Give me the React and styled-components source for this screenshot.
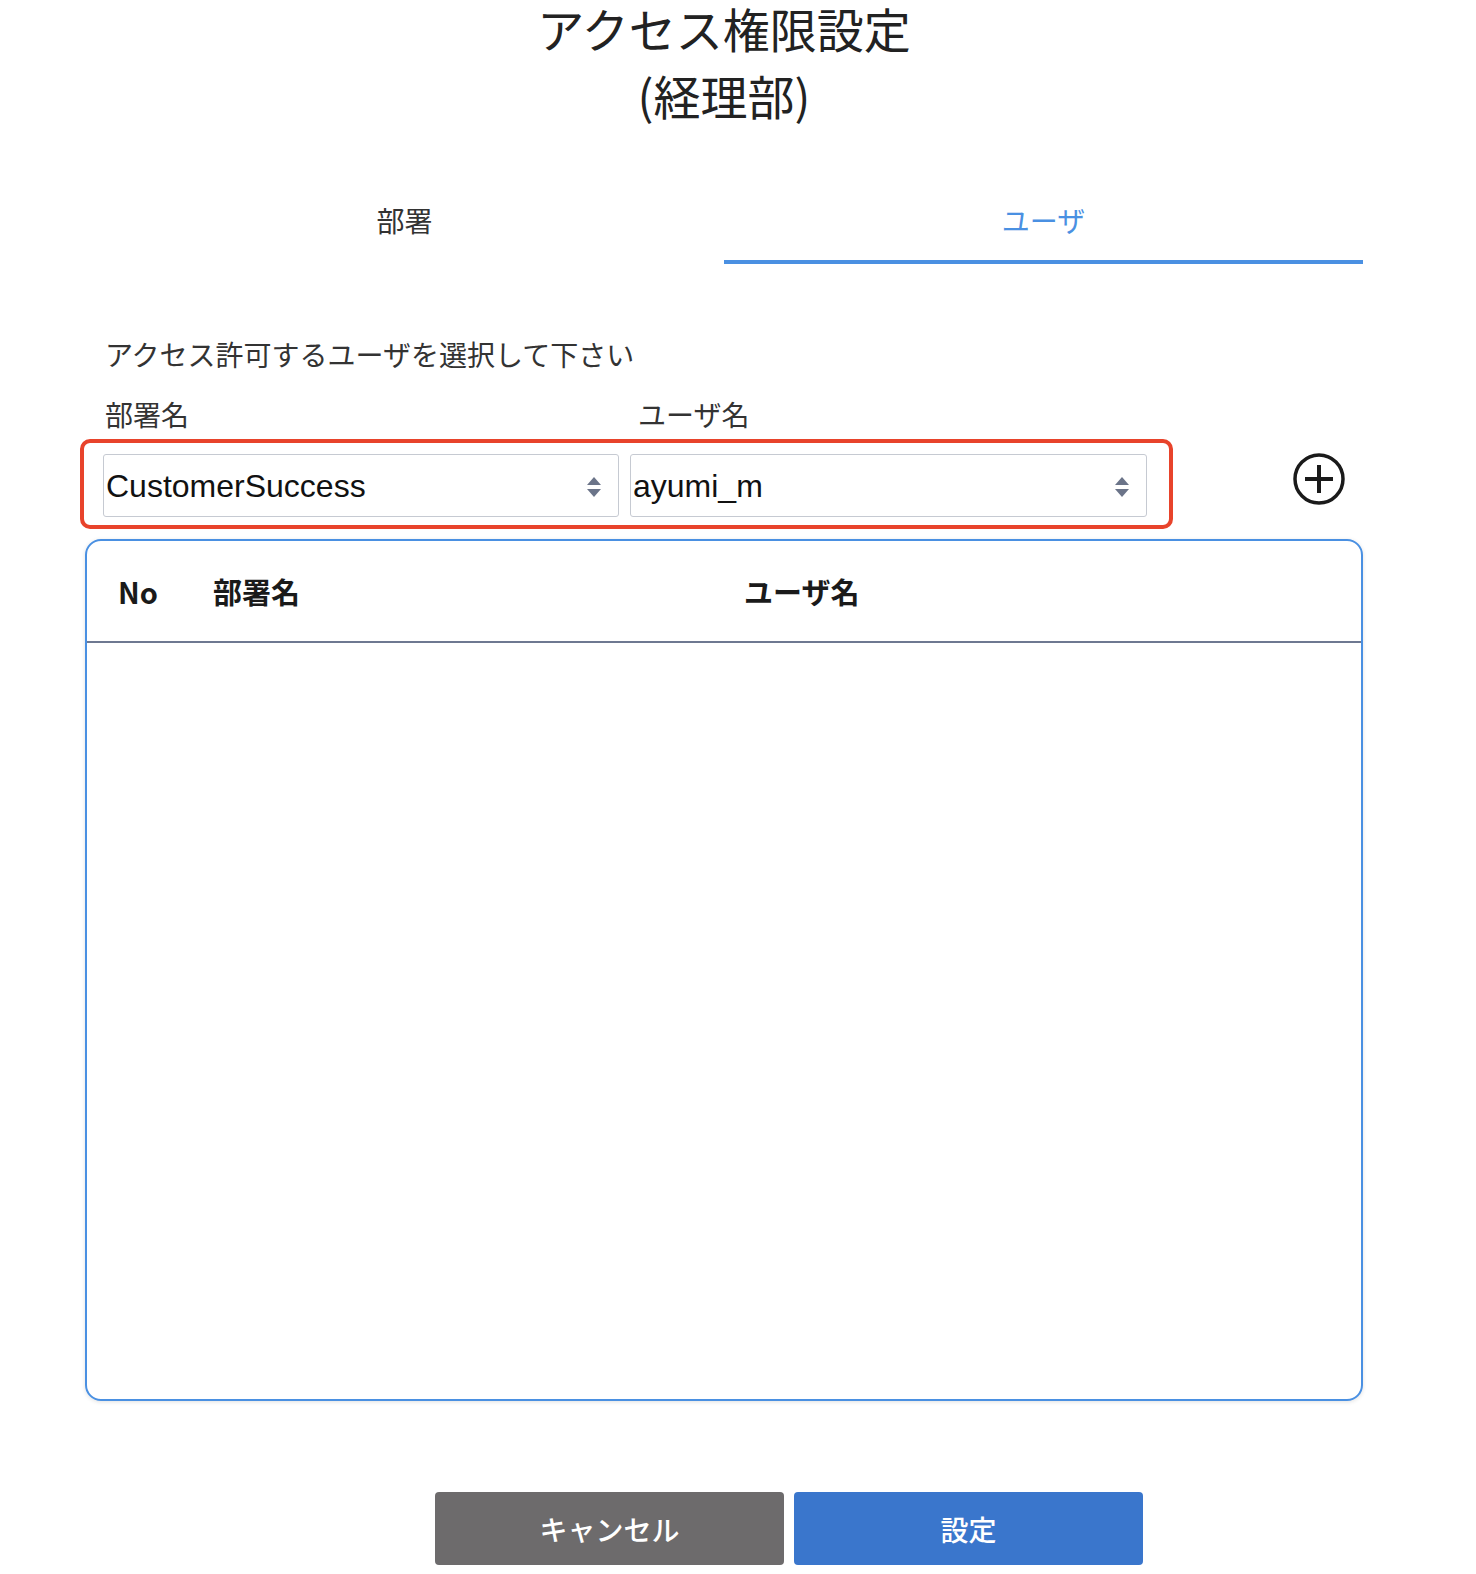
import React, { useState } from 'react';
import styled, { createGlobalStyle } from 'styled-components';

const GlobalStyle = createGlobalStyle`
  body {
    margin: 0;
    background: #fff;
    color: #222;
    font-family: "Noto Sans CJK JP", "Noto Sans", sans-serif;
  }
`;

const Page = styled.div`
  width: 1476px;
  padding-left: 85px;
  box-sizing: border-box;
  overflow: hidden;
`;

const Column = styled.div`
  width: 1278px;
`;

const Title = styled.h1`
  display: flex;
  flex-direction: column;
  align-items: center;
  gap: 11px;
  margin: 0;
  font-size: 47px;
  font-weight: 400;
  line-height: 56px;
  color: #222;
`;

const TabBar = styled.div`
  display: grid;
  grid-template-columns: 1fr 1fr;
`;

const Tab = styled.div`
  padding: 77px 0 20px;
  text-align: center;
  font-size: 28px;
  line-height: 40px;
  color: ${(p) => (p.active ? '#4a90e2' : '#333')};
  border-bottom: 4px solid ${(p) => (p.active ? '#4a90e2' : 'transparent')};
  cursor: pointer;
`;

const Prompt = styled.p`
  margin: 70px 0 20px;
  padding-left: 20px;
  font-size: 28px;
  line-height: 40px;
  color: #333;
`;

const LabelRow = styled.div`
  display: grid;
  grid-template-columns: 533px 1fr;
  padding-left: 20px;
  font-size: 28px;
  line-height: 40px;
  color: #333;
`;

const PickerRow = styled.div`
  display: flex;
  align-items: flex-start;
  margin-top: 5px;
`;

const PickerFrame = styled.div`
  display: grid;
  grid-template-columns: 516px 517px;
  gap: 11px;
  margin-left: -5px;
  padding: 11px 22px 8px 19px;
  border: 4px solid #e8432b;
  border-radius: 10px;
`;

const SelectBox = styled.div`
  display: flex;
  align-items: center;
  justify-content: space-between;
  height: 63px;
  box-sizing: border-box;
  padding: 2px 16px 0 2px;
  border: 1.5px solid #c6cad2;
  border-radius: 3px;
  background: #fff;
  font-family: "Liberation Sans", Arial, sans-serif;
  font-size: 32px;
  color: #111;
`;

const AddButton = styled.button`
  margin: 12px 16px 0 auto;
  padding: 0;
  border: none;
  background: none;
  cursor: pointer;
  line-height: 0;
`;

const Table = styled.div`
  margin-top: 10px;
  height: 862px;
  box-sizing: border-box;
  border: 2px solid #4a90e2;
  border-radius: 16px;
  box-shadow: 0 1px 4px rgba(0, 0, 0, 0.12);
`;

const HeaderRow = styled.div`
  display: grid;
  grid-template-columns: 95px 531px 1fr;
  align-items: center;
  height: 100px;
  padding-left: 31px;
  border-bottom: 2px solid #6e7891;
  font-size: 29px;
  font-weight: 700;
  color: #1a1a1a;
`;

const ButtonRow = styled.div`
  display: flex;
  gap: 10px;
  margin-top: 91px;
  padding-left: 350px;
`;

const ActionButton = styled.button`
  width: 349px;
  height: 73px;
  border: none;
  border-radius: 4px;
  background: ${(p) => (p.primary ? '#3a76cc' : '#6d6b6c')};
  color: #fff;
  font-family: "Noto Sans CJK JP", sans-serif;
  font-size: 28px;
  font-weight: 500;
  cursor: pointer;
`;

function UpDownArrow() {
  return (
    <svg width="16" height="22" viewBox="0 0 16 22">
      <path d="M8 1 L15 9 H1 Z" fill="#6b7489" />
      <path d="M8 21 L15 13 H1 Z" fill="#6b7489" />
    </svg>
  );
}

function PlusCircle() {
  return (
    <svg width="56" height="56" viewBox="0 0 56 56">
      <circle cx="28" cy="28" r="24" fill="none" stroke="#1a1a1a" strokeWidth="3.5" />
      <path d="M28 14 V42 M14 28 H42" stroke="#1a1a1a" strokeWidth="4" />
    </svg>
  );
}

export default function App() {
  const [tab, setTab] = useState('user');

  return (
    <Page>
      <GlobalStyle />
      <Column>
        <Title>
          <span>アクセス権限設定</span>
          <span>(経理部)</span>
        </Title>

        <TabBar>
          <Tab active={tab === 'dept'} onClick={() => setTab('dept')}>部署</Tab>
          <Tab active={tab === 'user'} onClick={() => setTab('user')}>ユーザ</Tab>
        </TabBar>

        <Prompt>アクセス許可するユーザを選択して下さい</Prompt>

        <LabelRow>
          <span>部署名</span>
          <span>ユーザ名</span>
        </LabelRow>

        <PickerRow>
          <PickerFrame>
            <SelectBox>
              <span>CustomerSuccess</span>
              <UpDownArrow />
            </SelectBox>
            <SelectBox>
              <span>ayumi_m</span>
              <UpDownArrow />
            </SelectBox>
          </PickerFrame>
          <AddButton aria-label="追加">
            <PlusCircle />
          </AddButton>
        </PickerRow>

        <Table>
          <HeaderRow>
            <span>No</span>
            <span>部署名</span>
            <span>ユーザ名</span>
          </HeaderRow>
        </Table>

        <ButtonRow>
          <ActionButton>キャンセル</ActionButton>
          <ActionButton primary>設定</ActionButton>
        </ButtonRow>
      </Column>
    </Page>
  );
}
